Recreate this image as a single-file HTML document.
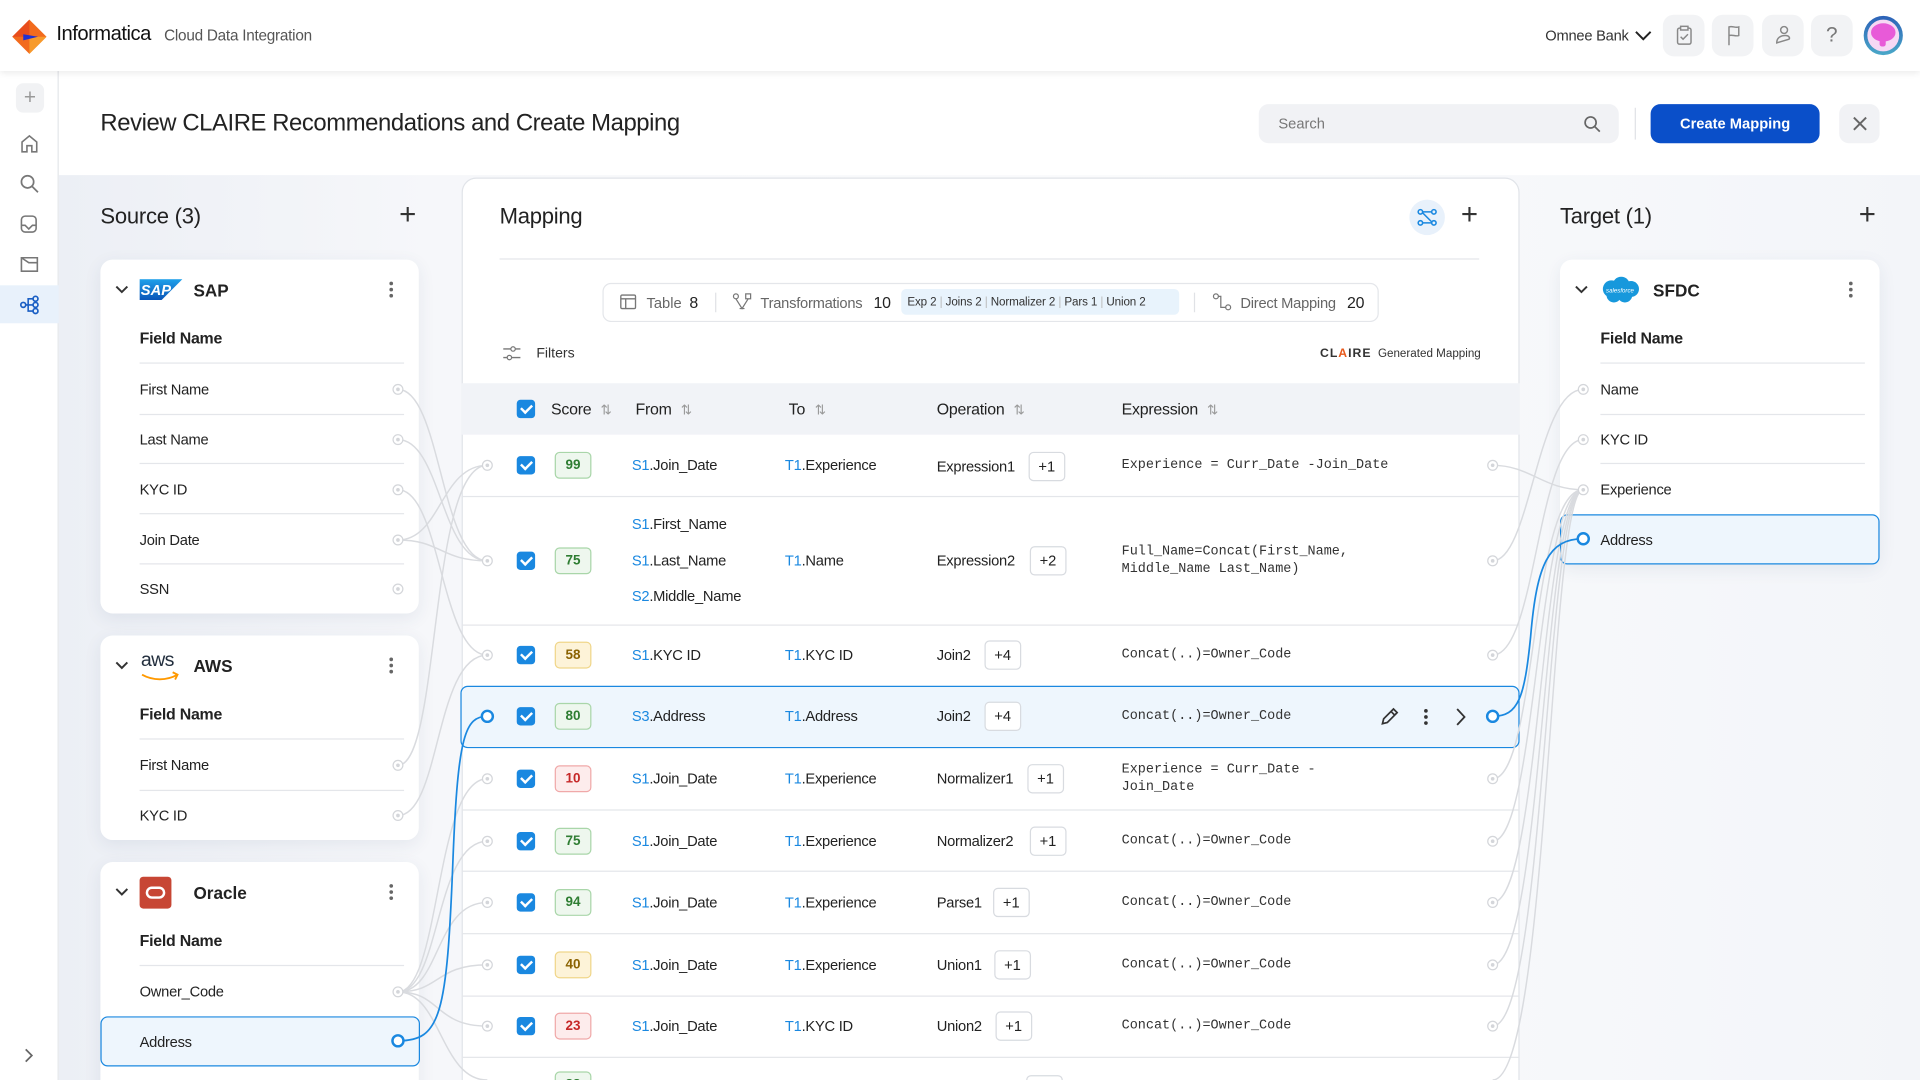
<!DOCTYPE html>
<html><head><meta charset="utf-8"><style>
*{box-sizing:border-box;margin:0;padding:0}
html,body{width:1920px;height:1080px;overflow:hidden;background:#fff;font-family:"Liberation Sans",sans-serif;color:#222}
#w{position:absolute;left:0;top:0;width:1568px;height:882px;transform:scale(1.22449);transform-origin:0 0;overflow:hidden;background:#fff}
.a{position:absolute}
.t{position:absolute;white-space:nowrap;transform:translateY(-50%)}
.card{position:absolute;background:#fff;border-radius:10px;box-shadow:0 4px 14px rgba(40,60,100,.08)}
.sep{position:absolute;height:1px;background:#e4e6ea}
.dot{position:absolute;width:9px;height:9px;border-radius:50%;border:1.5px solid #d4d6da;background:#fff;transform:translate(-50%,-50%)}
.dot::after{content:"";position:absolute;left:1.5px;top:1.5px;width:3px;height:3px;border-radius:50%;background:#d4d6da}
.bdot{position:absolute;width:11px;height:11px;border-radius:50%;border:2.5px solid #1a88e0;background:#fff;transform:translate(-50%,-50%)}
.cb{position:absolute;width:15px;height:15px;border-radius:3px;background:#1a88e0;transform:translateY(-50%)}
.cb::after{content:"";position:absolute;left:5px;top:2px;width:4px;height:7px;border:solid #fff;border-width:0 2px 2px 0;transform:rotate(45deg)}
.badge{position:absolute;width:30px;height:22px;border-radius:4px;font-size:11px;font-weight:bold;text-align:center;line-height:20px;transform:translateY(-50%)}
.g{background:#eef7ee;border:1px solid #a9d6a9;color:#2e7d32}
.y{background:#fdf3d8;border:1px solid #f0d68a;color:#8a6200}
.r{background:#fdecec;border:1px solid #f0a9a9;color:#c62828}
.plus{position:absolute;height:24px;border:1px solid #d8dbe0;border-radius:4px;font-size:12px;padding:0 7px;line-height:22px;transform:translateY(-50%);background:#fff}
.s{color:#1a88e0}
.cell{font-size:12px;color:#222;letter-spacing:-.2px}
.mono{font-family:"Liberation Mono",monospace;font-size:11px;color:#333}
.kb{position:absolute;width:3px}
.kb i{display:block;width:3px;height:3px;border-radius:50%;background:#666;margin-bottom:2px}
.ib{position:absolute;width:34px;height:34px;border-radius:9px;background:#f2f3f5}
</style></head><body><div id="w">
<div class="a" style="left:48px;top:143px;width:1520px;height:739px;background:linear-gradient(90deg,#eceff5 0%,#f6f7fa 20%,#fafbfc 60%,#f3f5f9 100%)"></div>
<div class="a" style="left:0;top:0;width:1568px;height:58px;background:#fff;box-shadow:0 2px 5px rgba(0,0,0,.08);z-index:3"></div>
<svg class="a" style="left:9px;top:15px;z-index:4" width="30" height="30" viewBox="0 0 30 30"><polygon points="15,1 29,15 15,29 1,15" fill="#f26b1d"/><polygon points="15,1 1,15 15,15" fill="#e84d1c"/><polygon points="15,15 29,15 15,29" fill="#f79a2b"/><polygon points="10,13 22,15 10,18" fill="#2030d0"/></svg>
<div class="t" style="left:46px;top:28px;font-size:16.5px;color:#111;z-index:4;letter-spacing:-.4px">Informatica</div>
<div class="t" style="left:134px;top:29px;font-size:12.5px;color:#555;z-index:4;letter-spacing:-.2px">Cloud Data Integration</div>
<div class="t" style="left:1262px;top:29px;font-size:12px;color:#333;z-index:4;letter-spacing:-.2px">Omnee Bank</div>
<svg class="a" style="left:1335px;top:23px;z-index:4" width="14" height="12"><path d="M1 3l6 6 6-6" stroke="#222" stroke-width="1.6" fill="none"/></svg>
<div class="ib" style="left:1358px;top:12px;z-index:4"><svg width="34" height="34"><rect x="12" y="11" width="11" height="13" rx="1.5" stroke="#888" fill="none" stroke-width="1.2"/><rect x="14.5" y="9.5" width="6" height="3" fill="#f2f3f5" stroke="#888" stroke-width="1.2"/><path d="M14.5 18l2 2 4-4" stroke="#888" fill="none" stroke-width="1.2"/></svg></div>
<div class="ib" style="left:1398px;top:12px;z-index:4"><svg width="34" height="34"><path d="M14 25V10c3-1 5 1 8 0v7c-3 1-5-1-8 0" stroke="#888" fill="none" stroke-width="1.2"/></svg></div>
<div class="ib" style="left:1439px;top:12px;z-index:4"><svg width="34" height="34"><circle cx="18" cy="12.5" r="2.8" stroke="#888" fill="none" stroke-width="1.2"/><path d="M12 23c0-4 3-6 7-6 3 0 4 2 3 3l-10 3z" stroke="#888" fill="none" stroke-width="1.2"/></svg></div>
<div class="ib" style="left:1479px;top:12px;z-index:4;text-align:center;line-height:34px;font-size:17px;color:#777">?</div>
<div class="a" style="left:1522px;top:13px;width:32px;height:32px;border-radius:50%;background:linear-gradient(#2c62b8,#4aa8c8);z-index:4"><div class="a" style="left:3px;top:3px;width:26px;height:26px;border-radius:50%;background:#f6d8f4"></div><div class="a" style="left:6px;top:6px;width:20px;height:15px;border-radius:50%;background:#e85ad8"></div><div class="a" style="left:13px;top:18px;width:5px;height:7px;background:#e85ad8;border-radius:2px"></div></div>
<div class="a" style="left:0;top:58px;width:48px;height:824px;background:#fff;border-right:1px solid #e4e6ea"></div>
<div class="a" style="left:13px;top:68px;width:23px;height:24px;border-radius:6px;background:#f1f2f4;text-align:center;line-height:23px;color:#999;font-size:17px">+</div>
<svg class="a" style="left:15px;top:108px" width="18" height="18"><path d="M3 8l6-5 6 5v8h-4v-5h-4v5H3z" stroke="#777" fill="none" stroke-width="1.3"/></svg>
<svg class="a" style="left:15px;top:141px" width="18" height="18"><circle cx="7.5" cy="7.5" r="5" stroke="#777" fill="none" stroke-width="1.4"/><path d="M11 11l5 5" stroke="#777" stroke-width="1.4"/></svg>
<svg class="a" style="left:15px;top:174px" width="18" height="18"><rect x="2.5" y="2.5" width="12" height="13" rx="3" stroke="#777" fill="none" stroke-width="1.3"/><path d="M2.5 10h3l3 3 3-3h3" stroke="#777" fill="none" stroke-width="1.3"/></svg>
<svg class="a" style="left:15px;top:207px" width="18" height="18"><path d="M2.5 3.5h13v11h-13z M2.5 3.5l6 4h7" stroke="#777" fill="none" stroke-width="1.3"/></svg>
<div class="a" style="left:0;top:233px;width:48px;height:31px;background:#e8f1fb"></div>
<svg class="a" style="left:15px;top:240px" width="18" height="18"><circle cx="4" cy="9" r="2" stroke="#1a5fc4" fill="none" stroke-width="1.4"/><circle cx="14" cy="4" r="2" stroke="#1a5fc4" fill="none" stroke-width="1.4"/><circle cx="14" cy="9" r="2" stroke="#1a5fc4" fill="none" stroke-width="1.4"/><circle cx="14" cy="14" r="2" stroke="#1a5fc4" fill="none" stroke-width="1.4"/><path d="M6 9h6M8 9V4h4M8 9v5h4" stroke="#1a5fc4" fill="none" stroke-width="1.3"/></svg>
<svg class="a" style="left:19px;top:856px" width="10" height="12"><path d="M2 1l5 5-5 5" stroke="#666" fill="none" stroke-width="1.4"/></svg>
<div class="t" style="left:82px;top:101px;font-size:19.5px;color:#222;letter-spacing:-.35px">Review CLAIRE Recommendations and Create Mapping</div>
<div class="a" style="left:1028px;top:85px;width:294px;height:32px;border-radius:8px;background:#f1f2f5"></div>
<div class="t" style="left:1044px;top:101px;font-size:12px;color:#777">Search</div>
<svg class="a" style="left:1293px;top:94px" width="15" height="15"><circle cx="6" cy="6" r="4.5" stroke="#666" fill="none" stroke-width="1.4"/><path d="M9.5 9.5l4 4" stroke="#666" stroke-width="1.4"/></svg>
<div class="a" style="left:1335px;top:88px;width:1px;height:26px;background:#e0e2e6"></div>
<div class="a" style="left:1348px;top:85px;width:138px;height:32px;border-radius:8px;background:#0a4fc9;color:#fff;font-size:12px;font-weight:bold;text-align:center;line-height:32px">Create Mapping</div>
<div class="a" style="left:1502px;top:85px;width:33px;height:32px;border-radius:8px;background:#f1f2f5"><svg width="33" height="32"><path d="M12 11l10 10M22 11l-10 10" stroke="#666" stroke-width="1.6"/></svg></div>
<div class="t" style="left:82px;top:177px;font-size:18px;color:#222;letter-spacing:-.2px">Source (3)</div>
<div class="t" style="left:326px;top:176px;font-size:24px;font-weight:300;color:#333">+</div>
<div class="card" style="left:82px;top:212px;width:260px;height:289px"></div>
<svg class="a" style="left:94px;top:232px" width="12" height="9"><path d="M1 2l4.5 4.5L10 2" stroke="#333" stroke-width="1.6" fill="none"/></svg>
<svg class="a" style="left:114px;top:228px" width="35" height="17"><defs><linearGradient id="sg" x1="0" y1="0" x2="0" y2="1"><stop offset="0" stop-color="#1ea0ea"/><stop offset="1" stop-color="#0a55b8"/></linearGradient></defs><polygon points="0,0 35,0 18,17 0,17" fill="url(#sg)"/><text x="1" y="13" font-size="12" font-weight="bold" fill="#fff" font-family="Liberation Sans" font-style="italic">SAP</text></svg>
<div class="t" style="left:158px;top:237px;font-size:14px;font-weight:bold">SAP</div>
<div class="kb" style="left:318px;top:230px"><i></i><i></i><i></i></div>
<div class="t" style="left:114px;top:276px;font-size:13px;font-weight:bold;letter-spacing:-.2px">Field Name</div>
<div class="sep" style="left:114px;top:296px;width:216px"></div>
<div class="t cell" style="left:114px;top:318px">First Name</div><div class="sep" style="left:114px;top:338px;width:216px"></div>
<div class="t cell" style="left:114px;top:359px">Last Name</div><div class="sep" style="left:114px;top:378px;width:216px"></div>
<div class="t cell" style="left:114px;top:400px">KYC ID</div><div class="sep" style="left:114px;top:419px;width:216px"></div>
<div class="t cell" style="left:114px;top:441px">Join Date</div><div class="sep" style="left:114px;top:460px;width:216px"></div>
<div class="t cell" style="left:114px;top:481px">SSN</div>
<div class="card" style="left:82px;top:519px;width:260px;height:167px"></div>
<svg class="a" style="left:94px;top:539px" width="12" height="9"><path d="M1 2l4.5 4.5L10 2" stroke="#333" stroke-width="1.6" fill="none"/></svg>
<div class="t" style="left:115px;top:540px;font-size:16px;color:#232f3e;letter-spacing:-.5px">aws</div>
<svg class="a" style="left:114px;top:548px" width="34" height="9"><path d="M2 3c9 5 20 5 29 0M27 1l4 2-2 4" stroke="#f90" stroke-width="1.5" fill="none"/></svg>
<div class="t" style="left:158px;top:544px;font-size:14px;font-weight:bold">AWS</div>
<div class="kb" style="left:318px;top:537px"><i></i><i></i><i></i></div>
<div class="t" style="left:114px;top:583px;font-size:13px;font-weight:bold;letter-spacing:-.2px">Field Name</div>
<div class="sep" style="left:114px;top:603px;width:216px"></div>
<div class="t cell" style="left:114px;top:625px">First Name</div><div class="sep" style="left:114px;top:645px;width:216px"></div>
<div class="t cell" style="left:114px;top:666px">KYC ID</div>
<div class="card" style="left:82px;top:704px;width:260px;height:200px"></div>
<svg class="a" style="left:94px;top:724px" width="12" height="9"><path d="M1 2l4.5 4.5L10 2" stroke="#333" stroke-width="1.6" fill="none"/></svg>
<div class="a" style="left:114px;top:716px;width:26px;height:26px;border-radius:3px;background:#c74634"><div class="a" style="left:5px;top:8px;width:16px;height:10px;border:2.2px solid #fff;border-radius:5px"></div></div>
<div class="t" style="left:158px;top:729px;font-size:14px;font-weight:bold">Oracle</div>
<div class="kb" style="left:318px;top:722px"><i></i><i></i><i></i></div>
<div class="t" style="left:114px;top:768px;font-size:13px;font-weight:bold;letter-spacing:-.2px">Field Name</div>
<div class="sep" style="left:114px;top:788px;width:216px"></div>
<div class="t cell" style="left:114px;top:810px">Owner_Code</div>
<div class="a" style="left:82px;top:830px;width:261px;height:41px;border:1px solid #1a88e0;border-radius:6px;background:#eef6fd"></div>
<div class="t cell" style="left:114px;top:851px">Address</div>
<div class="a" style="left:377px;top:145px;width:864px;height:760px;background:#fff;border:1px solid #e1e4e9;border-radius:12px"></div>
<div class="t" style="left:408px;top:177px;font-size:18px;letter-spacing:-.2px">Mapping</div>
<div class="a" style="left:1151px;top:163px;width:29px;height:29px;border-radius:50%;background:#e8f1fb"><svg width="29" height="29"><circle cx="9" cy="10" r="1.8" stroke="#1a88e0" fill="none" stroke-width="1.3"/><circle cx="20" cy="10" r="1.8" stroke="#1a88e0" fill="none" stroke-width="1.3"/><circle cx="9" cy="19" r="1.8" stroke="#1a88e0" fill="none" stroke-width="1.3"/><circle cx="20" cy="19" r="1.8" stroke="#1a88e0" fill="none" stroke-width="1.3"/><path d="M11 10h7M11 11l7 7M11 19h7" stroke="#1a88e0" stroke-width="1.2"/></svg></div>
<div class="t" style="left:1193px;top:176px;font-size:24px;font-weight:300;color:#333">+</div>
<div class="sep" style="left:408px;top:211px;width:800px"></div>
<div class="a" style="left:492px;top:231px;width:634px;height:32px;border:1px solid #e4e6ea;border-radius:7px"></div>
<svg class="a" style="left:506px;top:240px" width="14" height="13"><rect x="1" y="1" width="12" height="11" rx="1" stroke="#777" fill="none" stroke-width="1.1"/><path d="M1 4h12M5 4v8" stroke="#777" stroke-width="1.1"/></svg>
<div class="t" style="left:528px;top:247px;font-size:12px;color:#666">Table <span style="color:#222;font-size:13px;margin-left:3px">8</span></div>
<div class="a" style="left:584px;top:239px;width:1px;height:16px;background:#e0e2e6"></div>
<svg class="a" style="left:598px;top:239px" width="16" height="15"><circle cx="3" cy="3" r="2" stroke="#777" fill="none"/><rect x="11" y="1" width="4" height="4" stroke="#777" fill="none"/><path d="M3 5l5 8 5-8M6 13h4" stroke="#777" fill="none"/></svg>
<div class="t" style="left:621px;top:247px;font-size:12px;color:#666;letter-spacing:-.2px">Transformations <span style="color:#222;font-size:13px;margin-left:6px">10</span></div>
<div class="a" style="left:736px;top:236px;width:227px;height:21px;border-radius:4px;background:#e8f3fc"></div>
<div class="t" style="left:741px;top:246.5px;font-size:9.5px;color:#333;letter-spacing:-.1px">Exp 2 <span style="color:#bbb">|</span> Joins 2 <span style="color:#bbb">|</span> Normalizer 2 <span style="color:#bbb">|</span> Pars 1 <span style="color:#bbb">|</span> Union 2</div>
<div class="a" style="left:975px;top:239px;width:1px;height:16px;background:#e0e2e6"></div>
<svg class="a" style="left:990px;top:239px" width="16" height="15"><circle cx="3" cy="3" r="2" stroke="#777" fill="none"/><circle cx="13" cy="12" r="2" stroke="#777" fill="none"/><path d="M5 3h2v9h4" stroke="#777" fill="none"/></svg>
<div class="t" style="left:1013px;top:247px;font-size:12px;color:#666;letter-spacing:-.2px">Direct Mapping <span style="color:#222;font-size:13px;margin-left:6px">20</span></div>
<svg class="a" style="left:410px;top:282px" width="16" height="14"><path d="M1 3h6M11 3h4M1 10h3M8 10h7" stroke="#777" stroke-width="1.1"/><circle cx="9" cy="3" r="1.8" stroke="#777" fill="none"/><circle cx="6" cy="10" r="1.8" stroke="#777" fill="none"/></svg>
<div class="t" style="left:438px;top:289px;font-size:11.5px;color:#333">Filters</div>
<div class="t" style="left:1078px;top:289px;font-size:9.5px;color:#333"><b style="letter-spacing:.8px;font-size:10px">CL<span style="color:#e85a1c">A</span>IRE</b>&nbsp; Generated Mapping</div>
<div class="a" style="left:377px;top:313px;width:864px;height:42px;background:#f1f3f7"></div>
<div class="cb" style="left:422px;top:334px"></div>
<div class="t" style="left:450px;top:334px;font-size:13px;letter-spacing:-.2px">Score <span style="color:#999;font-size:11px;margin-left:4px">⇅</span></div>
<div class="t" style="left:519px;top:334px;font-size:13px;letter-spacing:-.2px">From <span style="color:#999;font-size:11px;margin-left:4px">⇅</span></div>
<div class="t" style="left:644px;top:334px;font-size:13px">To <span style="color:#999;font-size:11px;margin-left:4px">⇅</span></div>
<div class="t" style="left:765px;top:334px;font-size:13px;letter-spacing:-.2px">Operation <span style="color:#999;font-size:11px;margin-left:4px">⇅</span></div>
<div class="t" style="left:916px;top:334px;font-size:13px;letter-spacing:-.2px">Expression <span style="color:#999;font-size:11px;margin-left:4px">⇅</span></div>
<div class="sep" style="left:377px;top:405px;width:864px"></div>
<div class="sep" style="left:377px;top:510px;width:864px"></div>
<div class="sep" style="left:377px;top:661px;width:864px"></div>
<div class="sep" style="left:377px;top:711px;width:864px"></div>
<div class="sep" style="left:377px;top:762px;width:864px"></div>
<div class="sep" style="left:377px;top:813px;width:864px"></div>
<div class="sep" style="left:377px;top:863px;width:864px"></div>
<div class="a" style="left:376px;top:560px;width:865px;height:51px;border:1px solid #1a88e0;border-radius:6px;background:#eef6fd"></div>

<div class="cb" style="left:422px;top:380px"></div><div class="badge g" style="left:453px;top:380px">99</div>
<div class="t cell" style="left:516px;top:380px"><span class="s">S1</span>.Join_Date</div><div class="t cell" style="left:641px;top:380px"><span class="s">T1</span>.Experience</div>
<div class="t cell" style="left:765px;top:381px">Expression1</div><div class="plus" style="left:840px;top:381px">+1</div>
<div class="t mono" style="left:916px;top:380px">Experience = Curr_Date -Join_Date</div>

<div class="cb" style="left:422px;top:458px"></div><div class="badge g" style="left:453px;top:458px">75</div>
<div class="t cell" style="left:516px;top:428px"><span class="s">S1</span>.First_Name</div>
<div class="t cell" style="left:516px;top:458px"><span class="s">S1</span>.Last_Name</div>
<div class="t cell" style="left:516px;top:487px"><span class="s">S2</span>.Middle_Name</div>
<div class="t cell" style="left:641px;top:458px"><span class="s">T1</span>.Name</div>
<div class="t cell" style="left:765px;top:458px">Expression2</div><div class="plus" style="left:841px;top:458px">+2</div>
<div class="t mono" style="left:916px;top:458px;white-space:pre;line-height:14px">Full_Name=Concat(First_Name,
Middle_Name Last_Name)</div>

<div class="cb" style="left:422px;top:535px"></div><div class="badge y" style="left:453px;top:535px">58</div>
<div class="t cell" style="left:516px;top:535px"><span class="s">S1</span>.KYC ID</div><div class="t cell" style="left:641px;top:535px"><span class="s">T1</span>.KYC ID</div>
<div class="t cell" style="left:765px;top:535px">Join2</div><div class="plus" style="left:804px;top:535px">+4</div>
<div class="t mono" style="left:916px;top:535px">Concat(..)=Owner_Code</div>

<div class="cb" style="left:422px;top:585px"></div><div class="badge g" style="left:453px;top:585px">80</div>
<div class="t cell" style="left:516px;top:585px"><span class="s">S3</span>.Address</div><div class="t cell" style="left:641px;top:585px"><span class="s">T1</span>.Address</div>
<div class="t cell" style="left:765px;top:585px">Join2</div><div class="plus" style="left:804px;top:585px">+4</div>
<div class="t mono" style="left:916px;top:585px">Concat(..)=Owner_Code</div>
<svg class="a" style="left:1126px;top:577px" width="17" height="17"><path d="M3 14l1-4 8-8 3 3-8 8z M10 4l3 3" stroke="#333" stroke-width="1.4" fill="none"/></svg>
<div class="kb" style="left:1163px;top:579px"><i style="background:#333"></i><i style="background:#333"></i><i style="background:#333"></i></div>
<svg class="a" style="left:1188px;top:578px" width="10" height="15"><path d="M2 1l6 6.5L2 14" stroke="#333" stroke-width="1.5" fill="none"/></svg>

<div class="cb" style="left:422px;top:636px"></div><div class="badge r" style="left:453px;top:636px">10</div>
<div class="t cell" style="left:516px;top:636px"><span class="s">S1</span>.Join_Date</div><div class="t cell" style="left:641px;top:636px"><span class="s">T1</span>.Experience</div>
<div class="t cell" style="left:765px;top:636px">Normalizer1</div><div class="plus" style="left:839px;top:636px">+1</div>
<div class="t mono" style="left:916px;top:636px;white-space:pre;line-height:14px">Experience = Curr_Date -
Join_Date</div>

<div class="cb" style="left:422px;top:687px"></div><div class="badge g" style="left:453px;top:687px">75</div>
<div class="t cell" style="left:516px;top:687px"><span class="s">S1</span>.Join_Date</div><div class="t cell" style="left:641px;top:687px"><span class="s">T1</span>.Experience</div>
<div class="t cell" style="left:765px;top:687px">Normalizer2</div><div class="plus" style="left:841px;top:687px">+1</div>
<div class="t mono" style="left:916px;top:687px">Concat(..)=Owner_Code</div>

<div class="cb" style="left:422px;top:737px"></div><div class="badge g" style="left:453px;top:737px">94</div>
<div class="t cell" style="left:516px;top:737px"><span class="s">S1</span>.Join_Date</div><div class="t cell" style="left:641px;top:737px"><span class="s">T1</span>.Experience</div>
<div class="t cell" style="left:765px;top:737px">Parse1</div><div class="plus" style="left:811px;top:737px">+1</div>
<div class="t mono" style="left:916px;top:737px">Concat(..)=Owner_Code</div>

<div class="cb" style="left:422px;top:788px"></div><div class="badge y" style="left:453px;top:788px">40</div>
<div class="t cell" style="left:516px;top:788px"><span class="s">S1</span>.Join_Date</div><div class="t cell" style="left:641px;top:788px"><span class="s">T1</span>.Experience</div>
<div class="t cell" style="left:765px;top:788px">Union1</div><div class="plus" style="left:812px;top:788px">+1</div>
<div class="t mono" style="left:916px;top:788px">Concat(..)=Owner_Code</div>

<div class="cb" style="left:422px;top:838px"></div><div class="badge r" style="left:453px;top:838px">23</div>
<div class="t cell" style="left:516px;top:838px"><span class="s">S1</span>.Join_Date</div><div class="t cell" style="left:641px;top:838px"><span class="s">T1</span>.KYC ID</div>
<div class="t cell" style="left:765px;top:838px">Union2</div><div class="plus" style="left:813px;top:838px">+1</div>
<div class="t mono" style="left:916px;top:838px">Concat(..)=Owner_Code</div>
<div class="badge g" style="left:453px;top:886px">88</div><div class="plus" style="left:838px;top:890px">+1</div>
<div class="t" style="left:1274px;top:177px;font-size:18px;letter-spacing:-.2px">Target (1)</div>
<div class="t" style="left:1518px;top:176px;font-size:24px;font-weight:300;color:#333">+</div>
<div class="card" style="left:1274px;top:212px;width:261px;height:249px"></div>
<svg class="a" style="left:1286px;top:232px" width="12" height="9"><path d="M1 2l4.5 4.5L10 2" stroke="#333" stroke-width="1.6" fill="none"/></svg>
<svg class="a" style="left:1306px;top:225px" width="34" height="24"><g fill="#1798dc"><circle cx="10" cy="11" r="7"/><circle cx="18" cy="8" r="7"/><circle cx="26" cy="11" r="6.5"/><circle cx="21" cy="16" r="6"/><circle cx="12" cy="16" r="6"/></g><text x="17" y="14" font-size="5" fill="#fff" text-anchor="middle" font-family="Liberation Sans" font-style="italic">salesforce</text></svg>
<div class="t" style="left:1350px;top:237px;font-size:14px;font-weight:bold">SFDC</div>
<div class="kb" style="left:1510px;top:230px"><i></i><i></i><i></i></div>
<div class="t" style="left:1307px;top:276px;font-size:13px;font-weight:bold;letter-spacing:-.2px">Field Name</div>
<div class="sep" style="left:1307px;top:296px;width:216px"></div>
<div class="t cell" style="left:1307px;top:318px">Name</div><div class="sep" style="left:1307px;top:338px;width:216px"></div>
<div class="t cell" style="left:1307px;top:359px">KYC ID</div><div class="sep" style="left:1307px;top:378px;width:216px"></div>
<div class="t cell" style="left:1307px;top:400px">Experience</div>
<div class="a" style="left:1274px;top:420px;width:261px;height:41px;border:1px solid #1a88e0;border-radius:6px;background:#eef6fd"></div>
<div class="t cell" style="left:1307px;top:441px">Address</div>
<svg class="a" style="left:0;top:0" width="1568" height="882" fill="none">
<g stroke="#d9dbdf" stroke-width="1.2">
<path d="M325 318C360 318 360 458 398 458"/><path d="M325 359C360 359 360 458 398 458"/><path d="M325 400C360 400 360 535 398 535"/><path d="M325 441C360 441 360 380 398 380"/><path d="M325 441C360 441 360 458 398 458"/><path d="M325 625C360 625 350 380 398 380"/><path d="M325 666C360 666 355 535 398 535"/>
<path d="M325 810C360 810 355 636 398 636"/><path d="M325 810C360 810 355 687 398 687"/><path d="M325 810C360 810 355 737 398 737"/><path d="M325 810C360 810 355 788 398 788"/><path d="M325 810C360 810 355 838 398 838"/><path d="M325 810C360 810 360 882 398 882"/>
<path d="M1219 380C1250 380 1260 400 1293 400"/><path d="M1219 458C1250 458 1255 318 1293 318"/><path d="M1219 535C1255 535 1255 359 1293 359"/><path d="M1219 636C1255 636 1250 400 1293 400"/><path d="M1219 687C1255 687 1255 400 1293 400"/><path d="M1219 737C1258 737 1258 400 1293 400"/><path d="M1219 788C1260 788 1260 400 1293 400"/><path d="M1219 838C1262 838 1262 400 1293 400"/><path d="M1219 882C1265 882 1265 400 1293 400"/>
</g>
<path d="M325 850C360 850 365 830 370 700C374 600 380 585 398 585" stroke="#1a88e0" stroke-width="1.4"/>
<path d="M1219 585C1240 585 1245 570 1250 520C1255 460 1265 440 1293 440" stroke="#1a88e0" stroke-width="1.4"/>
</svg>
<div class="dot" style="left:325px;top:318px"></div><div class="dot" style="left:325px;top:359px"></div><div class="dot" style="left:325px;top:400px"></div><div class="dot" style="left:325px;top:441px"></div><div class="dot" style="left:325px;top:481px"></div>
<div class="dot" style="left:325px;top:625px"></div><div class="dot" style="left:325px;top:666px"></div><div class="dot" style="left:325px;top:810px"></div>
<div class="bdot" style="left:325px;top:850px"></div>
<div class="dot" style="left:398px;top:380px"></div><div class="dot" style="left:398px;top:458px"></div><div class="dot" style="left:398px;top:535px"></div><div class="bdot" style="left:398px;top:585px"></div><div class="dot" style="left:398px;top:636px"></div><div class="dot" style="left:398px;top:687px"></div><div class="dot" style="left:398px;top:737px"></div><div class="dot" style="left:398px;top:788px"></div><div class="dot" style="left:398px;top:838px"></div>
<div class="dot" style="left:1219px;top:380px"></div><div class="dot" style="left:1219px;top:458px"></div><div class="dot" style="left:1219px;top:535px"></div><div class="bdot" style="left:1219px;top:585px"></div><div class="dot" style="left:1219px;top:636px"></div><div class="dot" style="left:1219px;top:687px"></div><div class="dot" style="left:1219px;top:737px"></div><div class="dot" style="left:1219px;top:788px"></div><div class="dot" style="left:1219px;top:838px"></div>
<div class="dot" style="left:1293px;top:318px"></div><div class="dot" style="left:1293px;top:359px"></div><div class="dot" style="left:1293px;top:400px"></div><div class="bdot" style="left:1293px;top:440px"></div>
</div></body></html>
